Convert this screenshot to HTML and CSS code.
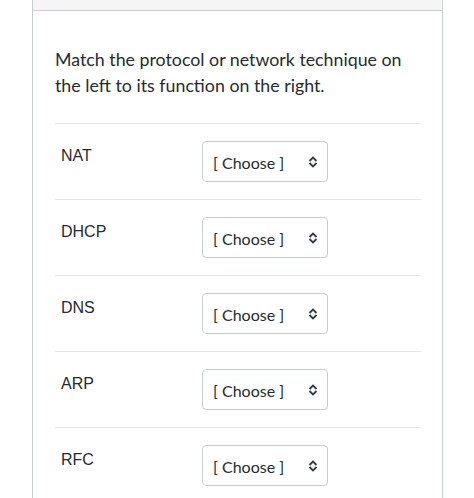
FILE: index.html
```html
<!DOCTYPE html>
<html>
<head>
<meta charset="utf-8">
<link rel="stylesheet" href="styles.css">
</head>
<body>
<div class="card">
  <div class="card-top"></div>
  <div class="card-body">
    <p class="question">Match the protocol or network technique on the left to its function on the right.</p>
    <div class="rows">
      <div class="row"><div class="label">NAT</div><div class="select"><span>[ Choose ]</span><svg class="arrows" width="10" height="12" viewBox="0 0 10 12"><path d="M1.5 5 L5 1.6 L8.5 5 M1.5 7 L5 10.4 L8.5 7" fill="none" stroke="#2d3b45" stroke-width="1.8"/></svg></div></div>
      <div class="row"><div class="label">DHCP</div><div class="select"><span>[ Choose ]</span><svg class="arrows" width="10" height="12" viewBox="0 0 10 12"><path d="M1.5 5 L5 1.6 L8.5 5 M1.5 7 L5 10.4 L8.5 7" fill="none" stroke="#2d3b45" stroke-width="1.8"/></svg></div></div>
      <div class="row"><div class="label">DNS</div><div class="select"><span>[ Choose ]</span><svg class="arrows" width="10" height="12" viewBox="0 0 10 12"><path d="M1.5 5 L5 1.6 L8.5 5 M1.5 7 L5 10.4 L8.5 7" fill="none" stroke="#2d3b45" stroke-width="1.8"/></svg></div></div>
      <div class="row"><div class="label">ARP</div><div class="select"><span>[ Choose ]</span><svg class="arrows" width="10" height="12" viewBox="0 0 10 12"><path d="M1.5 5 L5 1.6 L8.5 5 M1.5 7 L5 10.4 L8.5 7" fill="none" stroke="#2d3b45" stroke-width="1.8"/></svg></div></div>
      <div class="row"><div class="label">RFC</div><div class="select"><span>[ Choose ]</span><svg class="arrows" width="10" height="12" viewBox="0 0 10 12"><path d="M1.5 5 L5 1.6 L8.5 5 M1.5 7 L5 10.4 L8.5 7" fill="none" stroke="#2d3b45" stroke-width="1.8"/></svg></div></div>
    </div>
  </div>
</div>
</body>
</html>
```
FILE: styles.css
```css
html, body {
  margin: 0;
  padding: 0;
  background: #ffffff;
}
body {
  font-family: Lato, "Liberation Sans", sans-serif;
  color: #262b30;
  height: 498px;
  overflow: hidden;
}
.card {
  margin-left: 32px;
  width: 411px;
  box-sizing: border-box;
  border-left: 1px solid #c7cdd1;
  border-right: 1px solid #c7cdd1;
  min-height: 498px;
}
.card-top {
  height: 10px;
  background: #f5f5f5;
  border-bottom: 1px solid #c7cdd1;
}
.card-body {
  padding: 35px 21px 0 22px;
}
.question {
  margin: 0 0 25px 0;
  font-size: 17.8px;
  line-height: 26px;
}
.row {
  border-top: 1px solid #e2e4e6;
  display: flex;
  align-items: flex-start;
  height: 75px;
}
.label {
  font-family: "Liberation Sans", Arial, sans-serif;
  font-size: 16px;
  line-height: 24px;
  padding-top: 20px;
  padding-left: 6px;
  width: 141px;
}
.select {
  margin-top: 17px;
  width: 126px;
  height: 41px;
  box-sizing: border-box;
  border: 1px solid #c7cdd1;
  border-radius: 4px;
  display: flex;
  align-items: center;
  justify-content: space-between;
  padding: 0 9px 0 10px;
  font-size: 16px;
  background: #fff;
}
.select span {
  padding-top: 2px;
}
.arrows {
  display: block;
}
```
